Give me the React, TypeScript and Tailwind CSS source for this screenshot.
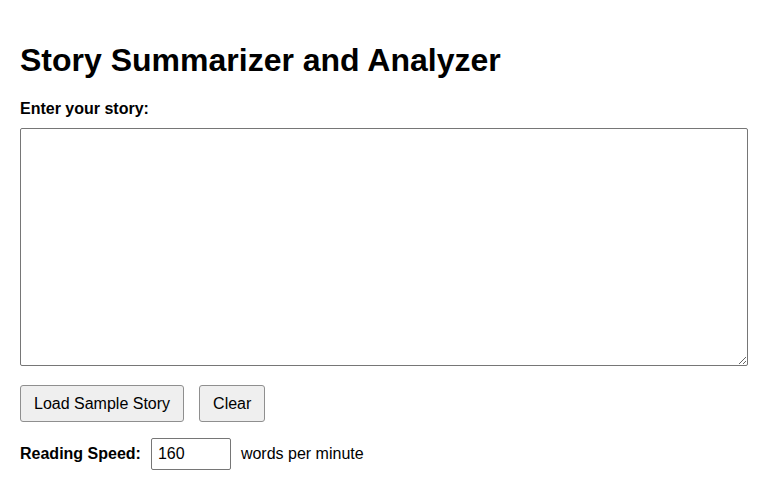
import { useState } from "react";

export default function App() {
  const [story, setStory] = useState("");
  const [speed, setSpeed] = useState("160");

  return (
    <div className="min-h-[480px] bg-white p-5 text-black font-['Liberation_Sans',Arial,sans-serif]">
      <h1 className="mt-[22px] mb-[21px] text-[32px] font-bold leading-[37px]">
        Story Summarizer and Analyzer
      </h1>

      <label className="mb-[10px] block text-base font-bold leading-[18px]">
        Enter your story:
      </label>
      <textarea
        value={story}
        onChange={e => setStory(e.target.value)}
        className="block h-[238px] w-full rounded-[2px] border border-[#767676] p-2 text-base"
      />

      <div className="mt-[19px] flex items-center gap-[15px]">
        <button
          onClick={() => setStory("Once upon a time...")}
          className="h-[37px] rounded-[3px] border border-[#8f8f8f] bg-[#efefef] px-[13px] text-base leading-[18px]"
        >
          Load Sample Story
        </button>
        <button
          onClick={() => setStory("")}
          className="h-[37px] rounded-[3px] border border-[#8f8f8f] bg-[#efefef] px-[13px] text-base leading-[18px]"
        >
          Clear
        </button>
      </div>

      <div className="mt-4 flex items-center">
        <span className="text-base font-bold">Reading Speed:</span>
        <input
          value={speed}
          onChange={e => setSpeed(e.target.value)}
          className="ml-[10px] h-8 w-20 rounded-[2px] border border-[#767676] px-[6px] text-base"
        />
        <span className="ml-[10px] text-base">words per minute</span>
      </div>
    </div>
  );
}
